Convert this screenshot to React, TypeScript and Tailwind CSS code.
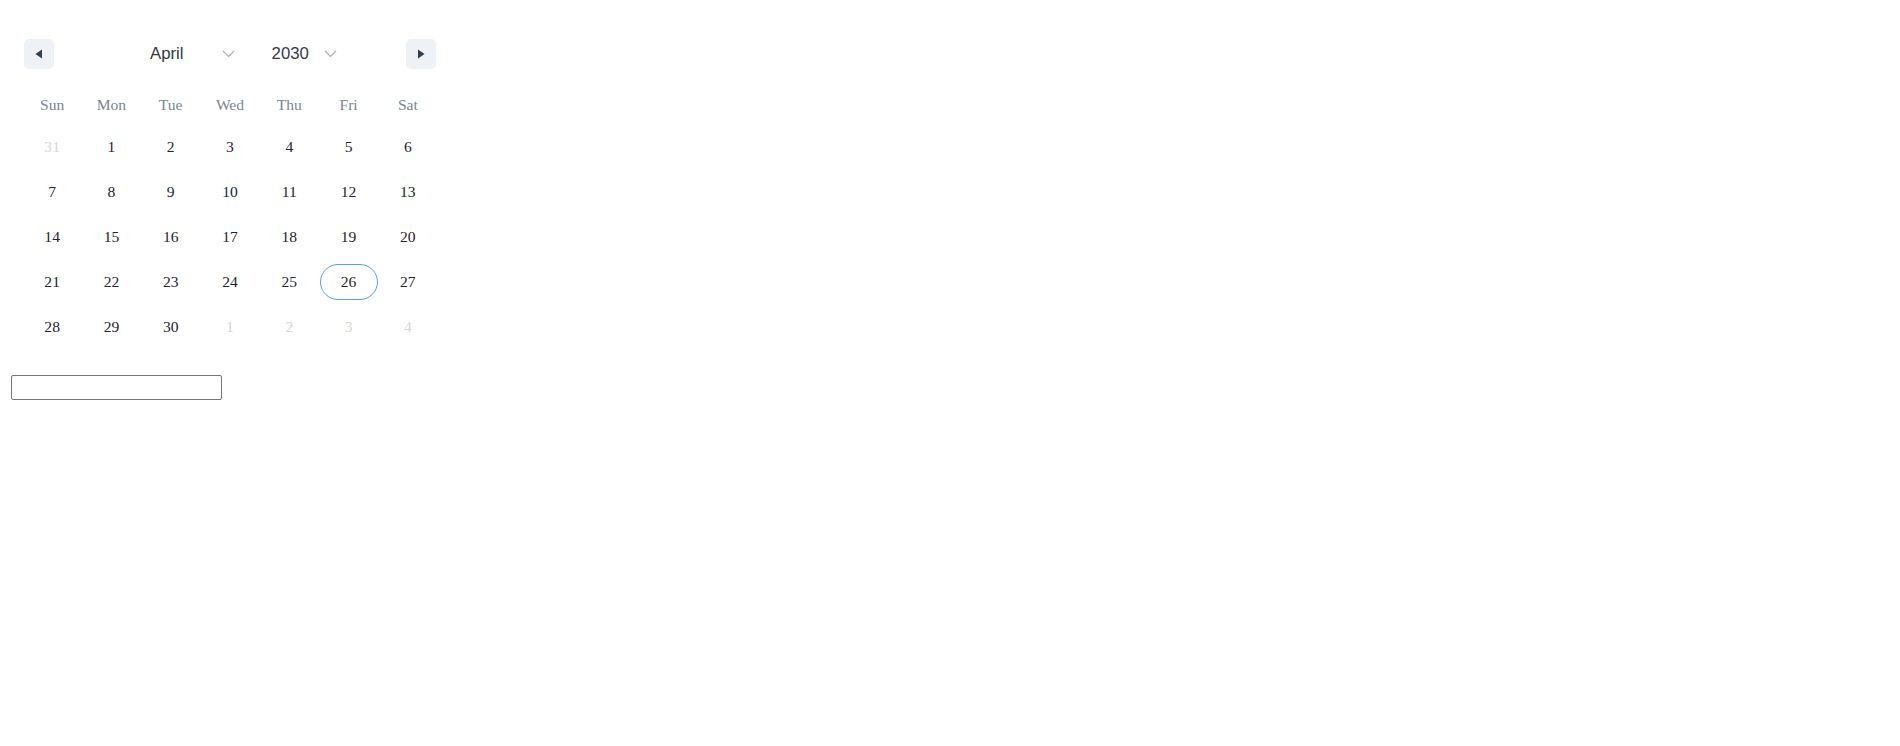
import React from "react";

const weekdays = ["Sun", "Mon", "Tue", "Wed", "Thu", "Fri", "Sat"];

type Day = { n: number; muted?: boolean; selected?: boolean };

const days: Day[] = [
  { n: 31, muted: true },
  ...Array.from({ length: 30 }, (_, i) => ({ n: i + 1, selected: i + 1 === 26 })),
  { n: 1, muted: true },
  { n: 2, muted: true },
  { n: 3, muted: true },
  { n: 4, muted: true },
];

function Chevron() {
  return (
    <svg width="13" height="8" viewBox="0 0 13 8" fill="none">
      <polyline points="1,1 6.5,6.5 12,1" stroke="#aab0b8" strokeWidth="1.2" />
    </svg>
  );
}

export default function App() {
  return (
    <div className="min-h-[746px] w-full bg-white pt-[39px]">
      <div className="ml-[24px] w-[412px]">
        <div className="flex h-[30px] items-center">
          <button className="flex h-[30px] w-[30px] items-center justify-center rounded-[5px] bg-[#eef2f7]">
            <svg width="8" height="10" viewBox="0 0 8 10">
              <polygon points="7,0.5 7,9.5 0.5,5" fill="#2f4054" />
            </svg>
          </button>
          <div
            className="ml-[96px] flex items-center text-[16.8px] text-[#333a44]"
            style={{ fontFamily: '"Liberation Sans", Arial, sans-serif' }}
          >
            <span>April</span>
            <span className="ml-[38px] flex items-center">
              <Chevron />
            </span>
            <span className="ml-[37px]">2030</span>
            <span className="ml-[15px] flex items-center">
              <Chevron />
            </span>
          </div>
          <button className="ml-auto flex h-[30px] w-[30px] items-center justify-center rounded-[5px] bg-[#eef2f7]">
            <svg width="8" height="10" viewBox="0 0 8 10">
              <polygon points="1,0.5 1,9.5 7.5,5" fill="#2f4054" />
            </svg>
          </button>
        </div>

        <div
          className="-mx-[1.5px] mt-[24px] grid h-[24px] grid-cols-7 items-center text-center text-[15.6px] text-[#7a8596]"
          style={{ fontFamily: '"Liberation Serif", "Times New Roman", serif' }}
        >
          {weekdays.map((w) => (
            <div key={w}>{w}</div>
          ))}
        </div>

        <div
          className="-mx-[1.5px] mt-[12px] grid grid-cols-7 gap-y-[9px] text-[15.6px]"
          style={{ fontFamily: '"Liberation Serif", "Times New Roman", serif' }}
        >
          {days.map((d, i) => (
            <div key={i} className="flex h-[36px] items-center justify-center">
              <div
                className={
                  d.selected
                    ? "flex h-[36px] w-[58px] items-center justify-center rounded-full border border-[#5a9bf6] text-[#1f2430]"
                    : d.muted
                    ? "flex h-[36px] w-[58px] items-center justify-center text-[#d2d7de]"
                    : "flex h-[36px] w-[58px] items-center justify-center text-[#1f2430]"
                }
              >
                {d.n}
              </div>
            </div>
          ))}
        </div>
      </div>

      <input
        type="text"
        className="ml-[11px] mt-[30px] block h-[25px] w-[211px] rounded-[2px] border border-[#767676] bg-white px-[2px] text-[16px]"
      />
    </div>
  );
}
